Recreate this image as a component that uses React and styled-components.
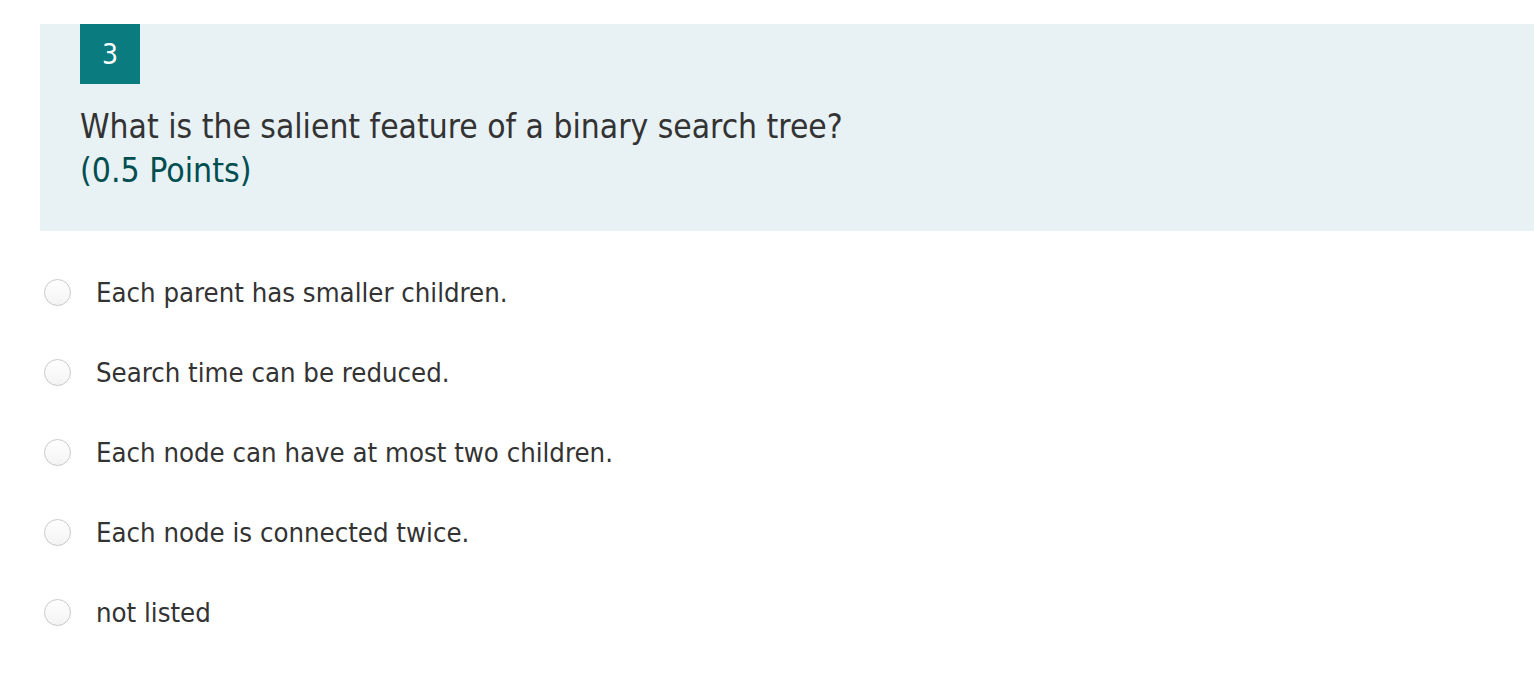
import React from 'react';
import styled, { createGlobalStyle } from 'styled-components';

const GlobalStyle = createGlobalStyle`
  html, body {
    margin: 0;
    padding: 0;
    background: #ffffff;
  }
  body {
    font-family: "DejaVu Sans Condensed", "DejaVu Sans", "Noto Sans", sans-serif;
    color: #333333;
  }
`;

const Page = styled.div`
  padding: 24px 0 0 40px;
  overflow: hidden;
`;

const QuestionHeader = styled.div`
  background: #e8f1f4;
  padding: 0 40px;
  height: 207px;
  box-sizing: border-box;
`;

const Badge = styled.div`
  width: 60px;
  height: 60px;
  background: #0a7c7f;
  color: #ffffff;
  font-size: 28px;
  display: flex;
  align-items: center;
  justify-content: center;
`;

const Title = styled.div`
  margin-top: 21px;
  font-size: 33.3px;
  line-height: 44px;
  color: #333333;
`;

const Points = styled.div`
  font-size: 33.5px;
  line-height: 44px;
  color: #004e50;
`;

const Options = styled.div`
  padding-top: 21px;
  display: flex;
  flex-direction: column;
`;

const Option = styled.label`
  display: flex;
  align-items: center;
  height: 80px;
  gap: 25px;
  cursor: pointer;
`;

const Radio = styled.span`
  width: 27px;
  height: 27px;
  margin-left: 4px;
  border-radius: 50%;
  border: 1px solid #c8c8c8;
  background: linear-gradient(#ffffff, #f3f3f3);
  box-sizing: border-box;
  flex-shrink: 0;
`;

const OptionText = styled.span`
  font-size: 27.3px;
  color: #333333;
`;

const choices = [
  'Each parent has smaller children.',
  'Search time can be reduced.',
  'Each node can have at most two children.',
  'Each node is connected twice.',
  'not listed',
];

export default function App() {
  return (
    <>
      <GlobalStyle />
      <Page>
        <QuestionHeader>
          <Badge>3</Badge>
          <Title>What is the salient feature of a binary search tree?</Title>
          <Points>(0.5 Points)</Points>
        </QuestionHeader>
        <Options>
          {choices.map((c) => (
            <Option key={c}>
              <Radio />
              <OptionText>{c}</OptionText>
            </Option>
          ))}
        </Options>
      </Page>
    </>
  );
}
